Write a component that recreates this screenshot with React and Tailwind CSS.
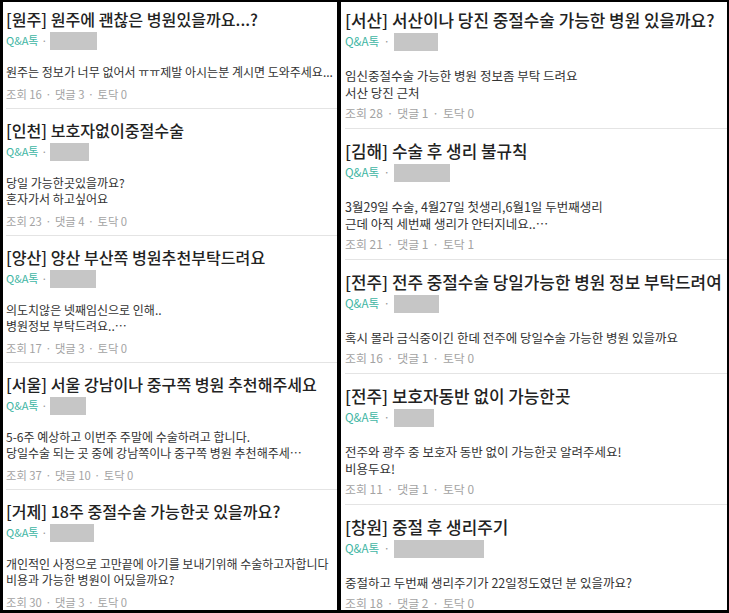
const left = [
  {
    title: '[원주] 원주에 괜찮은 병원있을까요...?',
    box: 47,
    body: ['원주는 정보가 너무 없어서 ㅠㅠ제발 아시는분 계시면 도와주세요...'],
    meta: [16, 3, 0],
  },
  {
    title: '[인천] 보호자없이중절수술',
    box: 39,
    body: ['당일 가능한곳있을까요?', '혼자가서 하고싶어요'],
    meta: [23, 4, 0],
  },
  {
    title: '[양산] 양산 부산쪽 병원추천부탁드려요',
    box: 46,
    body: ['의도치않은 넷째임신으로 인해..', '병원정보 부탁드려요..…'],
    meta: [17, 3, 0],
  },
  {
    title: '[서울] 서울 강남이나 중구쪽 병원 추천해주세요',
    box: 36,
    body: ['5-6주 예상하고 이번주 주말에 수술하려고 합니다.', '당일수술 되는 곳 중에 강남쪽이나 중구쪽 병원 추천해주세…'],
    meta: [37, 10, 0],
  },
  {
    title: '[거제] 18주 중절수술 가능한곳 있을까요?',
    box: 44,
    body: ['개인적인 사정으로 고만끝에 아기를 보내기위해 수술하고자합니다', '비용과 가능한 병원이 어딨을까요?'],
    meta: [30, 3, 0],
  },
];

const right = [
  {
    title: '[서산] 서산이나 당진 중절수술 가능한 병원 있을까요?',
    box: 44,
    body: ['임신중절수술 가능한 병원 정보좀 부탁 드려요', '서산 당진 근처'],
    meta: [28, 1, 0],
  },
  {
    title: '[김해] 수술 후 생리 불규칙',
    box: 56,
    body: ['3월29일 수술, 4월27일 첫생리,6월1일 두번째생리', '근데 아직 세번째 생리가 안터지네요..…'],
    meta: [21, 1, 1],
  },
  {
    title: '[전주] 전주 중절수술 당일가능한 병원 정보 부탁드려여',
    box: 45,
    body: ['혹시 몰라 금식중이긴 한데 전주에 당일수술 가능한 병원 있을까요'],
    meta: [16, 1, 0],
  },
  {
    title: '[전주] 보호자동반 없이 가능한곳',
    box: 40,
    body: ['전주와 광주 중 보호자 동반 없이 가능한곳 알려주세요!', '비용두요!'],
    meta: [11, 1, 0],
  },
  {
    title: '[창원] 중절 후 생리주기',
    box: 90,
    body: ['중절하고 두번째 생리주기가 22일정도였던 분 있을까요?'],
    meta: [18, 2, 0],
  },
];

// left column is rendered a little smaller than the right one in the capture
const sizes = {
  left: {
    first: 'pt-[6px] pb-[6px]',
    item: 'pt-[10px] pb-[6px]',
    title: 'text-[16.1px] leading-[22px]',
    tag: 'h-[21px] text-[11px]',
    dot: 'w-[12px]',
    box: 'h-[18px]',
    body: 'mt-[13px] text-[12px] leading-[16px]',
    meta: 'mt-[6px] text-[11.3px] leading-[16px]',
    sep: 'w-[13px]',
  },
  right: {
    first: 'pt-[6px] pb-[7px]',
    item: 'pt-[10px] pb-[7px]',
    title: 'text-[16.9px] leading-[23px]',
    tag: 'h-[22px] text-[11.6px]',
    dot: 'w-[15px]',
    box: 'h-[18px]',
    body: 'mt-[14px] text-[12.5px] leading-[17px]',
    meta: 'mt-[3px] text-[11.9px] leading-[17px]',
    sep: 'w-[14.5px]',
  },
};

const Post = ({ post, first, s }) => (
  <div className={`border-b border-[#e4e4e4] ${first ? s.first : s.item}`}>
    <div className={`${s.title} font-medium text-[#222] whitespace-nowrap`}>{post.title}</div>
    <div className={`flex items-center ${s.tag} text-[#999]`}>
      <span className="text-[#3fb6a4]">Q&amp;A톡</span>
      <span className={`${s.dot} text-center`}>·</span>
      <span className={`${s.box} bg-[#c6c6c6]`} style={{ width: post.box }} />
    </div>
    <div className={`${s.body} text-[#333] whitespace-nowrap`}>
      {post.body.map((line) => (
        <div key={line}>{line}</div>
      ))}
    </div>
    <div className={`${s.meta} flex text-[#a3a3a3] whitespace-nowrap`}>
      <span>조회 {post.meta[0]}</span>
      <span className={`${s.sep} text-center`}>·</span>
      <span>댓글 {post.meta[1]}</span>
      <span className={`${s.sep} text-center`}>·</span>
      <span>토닥 {post.meta[2]}</span>
    </div>
  </div>
);

export default function App() {
  return (
    <div
      className="w-[729px] h-[613px] bg-black flex gap-[4px] pt-[2px] pl-[3px] pr-[2px] pb-[3px]"
      style={{ fontFamily: '"Noto Sans CJK KR", "Noto Sans", sans-serif' }}
    >
      <div className="w-[334px] h-full bg-white overflow-hidden pl-[3px]">
        {left.map((p, i) => (
          <Post key={p.title} post={p} first={i === 0} s={sizes.left} />
        ))}
      </div>
      <div className="flex-1 h-full bg-white overflow-hidden pl-[4px]">
        {right.map((p, i) => (
          <Post key={p.title} post={p} first={i === 0} s={sizes.right} />
        ))}
      </div>
    </div>
  );
}
